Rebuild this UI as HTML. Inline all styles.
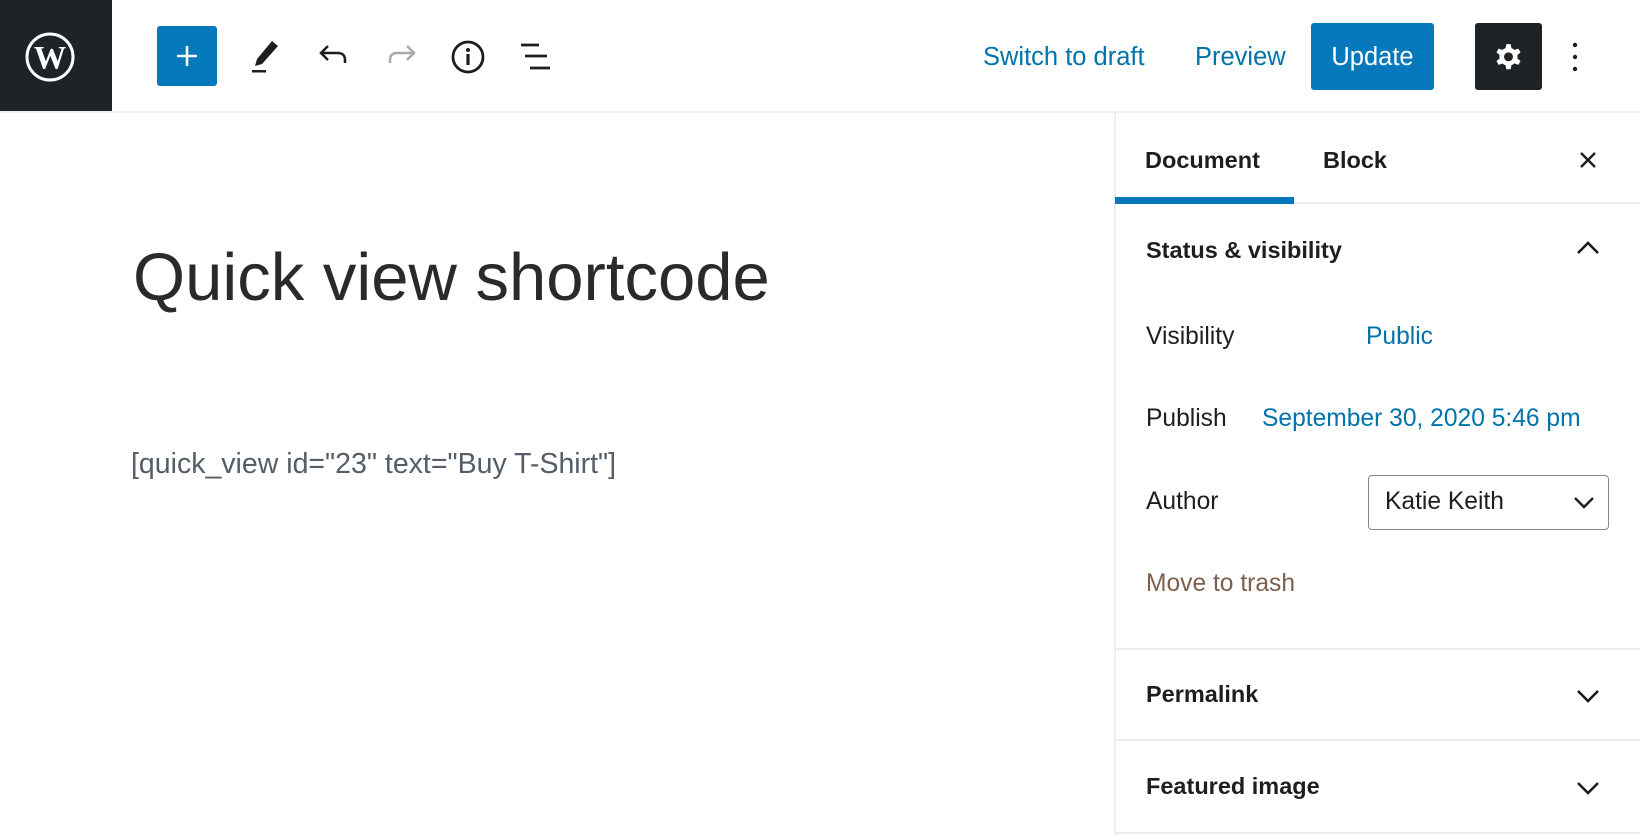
<!DOCTYPE html>
<html><head><meta charset="utf-8"><style>
*{margin:0;padding:0;box-sizing:border-box}
body{width:1640px;height:835px;background:#fff;font-family:"Liberation Sans",Arial,sans-serif;color:#1e1e1e;position:relative;overflow:hidden}
.a{position:absolute;white-space:nowrap}
.blue{color:#0073aa}
.t{font-size:24.6px;line-height:30px}
.b{font-weight:bold;font-size:23.5px;line-height:30px;color:#1e1e1e}
.hr{position:absolute;left:1115px;right:0;height:2px;background:#ececec}
</style></head><body>
<div class="a" style="left:0;top:0;width:112px;height:112px;background:#1e2327"></div>
<svg class="a" style="left:25px;top:32px" width="50" height="50" viewBox="0 0 20 20"><circle cx="10" cy="10" r="9.2" fill="none" stroke="#fff" stroke-width="1.2"/><text x="10" y="14.6" font-family="Liberation Serif,serif" font-weight="bold" font-size="13" fill="#fff" text-anchor="middle">W</text></svg>
<div class="a" style="left:0;top:111px;width:1640px;height:2px;background:#eee"></div>
<div class="a" style="left:157px;top:26px;width:60px;height:60px;background:#0679bd;border-radius:3px"></div>
<svg class="a" style="left:157px;top:26px" width="60" height="60"><path d="M30 20V40M20 30H40" stroke="#fff" stroke-width="2.5"/></svg>
<svg class="a" style="left:248px;top:38px" width="36" height="36" viewBox="0 0 36 36"><path d="M24 3l6 5L14 26l-7 2 2-7z" fill="#1e1e1e"/><rect x="4" y="32" width="14" height="2.5" fill="#1e1e1e"/></svg>
<svg class="a" style="left:316px;top:40px" width="36" height="30" viewBox="0 0 36 30"><path d="M12 6L5 13l7 7M5 13h17c5 0 7 3 7 7v3" fill="none" stroke="#1e1e1e" stroke-width="2.5"/></svg>
<svg class="a" style="left:383px;top:40px" width="36" height="30" viewBox="0 0 36 30"><path d="M24 6l7 7-7 7M31 13H14c-5 0-7 3-7 7v3" fill="none" stroke="#a7aaad" stroke-width="2.5"/></svg>
<svg class="a" style="left:450px;top:40px" width="36" height="36"><circle cx="18" cy="17" r="15" fill="none" stroke="#1e1e1e" stroke-width="2.8"/><circle cx="18" cy="10" r="2" fill="#1e1e1e"/><rect x="16.4" y="14" width="3.2" height="11" fill="#1e1e1e"/></svg>
<svg class="a" style="left:518px;top:40px" width="40" height="36"><path d="M3 5h18M7 16h22M12 28h20" stroke="#1e1e1e" stroke-width="2.8"/></svg>
<div class="a blue" style="left:983px;top:42px;font-size:25.5px;line-height:30px">Switch to draft</div>
<div class="a blue" style="left:1195px;top:42px;font-size:25.5px;line-height:30px">Preview</div>
<div class="a" style="left:1311px;top:23px;width:123px;height:67px;background:#0679bd;border-radius:3px;color:#fff;font-size:25.5px;line-height:69px;text-align:center">Update</div>
<div class="a" style="left:1475px;top:23px;width:67px;height:67px;background:#1e2327;border-radius:3px"></div>
<svg class="a" style="left:1490px;top:38px" width="37" height="37" viewBox="0 0 24 24"><path fill="#fff" d="M13.4 2h-2.8l-.5 2.6a7.6 7.6 0 0 0-2 1.1L5.6 4.9 4.2 7.3l2 1.7a7.6 7.6 0 0 0 0 2.3l-2 1.7 1.4 2.4 2.5-.9a7.6 7.6 0 0 0 2 1.2l.5 2.6h2.8l.5-2.6a7.6 7.6 0 0 0 2-1.2l2.5.9 1.4-2.4-2-1.7a7.6 7.6 0 0 0 0-2.3l2-1.7-1.4-2.4-2.5.8a7.6 7.6 0 0 0-2-1.1z" transform="translate(0 2)"/><circle cx="12" cy="12.2" r="2.9" fill="#1e2327"/></svg>
<svg class="a" style="left:1570px;top:42px" width="10" height="30"><circle cx="5" cy="3" r="2.2" fill="#1e1e1e"/><circle cx="5" cy="15" r="2.2" fill="#1e1e1e"/><circle cx="5" cy="27" r="2.2" fill="#1e1e1e"/></svg>
<div class="a" style="left:133px;top:238px;font-size:67px;line-height:80px;color:#2a2a2a;letter-spacing:0px">Quick view shortcode</div>
<div class="a" style="left:131px;top:448px;font-size:28.5px;line-height:32px;color:#555d66">[quick_view id="23" text="Buy T-Shirt"]</div>
<div class="a" style="left:1114px;top:113px;width:2px;height:722px;background:#eee"></div>
<div class="a b" style="left:1145px;top:145px">Document</div>
<div class="a b" style="left:1323px;top:145px">Block</div>
<svg class="a" style="left:1578px;top:150px" width="20" height="20"><path d="M3 3l14 14M17 3L3 17" stroke="#1e1e1e" stroke-width="2.4"/></svg>
<div class="hr" style="top:202px"></div>
<div class="a" style="left:1115px;top:197px;width:179px;height:7px;background:#0679bd"></div>
<div class="a b" style="left:1146px;top:235px">Status &amp; visibility</div>
<svg class="a" style="left:1576px;top:240px" width="24" height="16"><path d="M2 13l10-10 10 10" fill="none" stroke="#1e1e1e" stroke-width="2.6"/></svg>
<div class="a t" style="left:1146px;top:322px">Visibility</div>
<div class="a t blue" style="left:1366px;top:322px">Public</div>
<div class="a t" style="left:1146px;top:404px">Publish</div>
<div class="a t blue" style="left:1262px;top:404px">September 30, 2020 5:46 pm</div>
<div class="a t" style="left:1146px;top:487px">Author</div>
<div class="a" style="left:1368px;top:475px;width:241px;height:55px;border:1.5px solid #7e8993;border-radius:4px"></div>
<div class="a t" style="left:1385px;top:487px">Katie Keith</div>
<svg class="a" style="left:1573px;top:495px" width="22" height="14"><path d="M2 3l9 9 9-9" fill="none" stroke="#1e1e1e" stroke-width="2.4"/></svg>
<div class="a t" style="left:1146px;top:569px;color:#7d5f4c">Move to trash</div>
<div class="hr" style="top:648px"></div>
<div class="a b" style="left:1146px;top:679px">Permalink</div>
<svg class="a" style="left:1576px;top:688px" width="24" height="16"><path d="M2 3l10 10 10-10" fill="none" stroke="#1e1e1e" stroke-width="2.6"/></svg>
<div class="hr" style="top:739px"></div>
<div class="a b" style="left:1146px;top:771px">Featured image</div>
<svg class="a" style="left:1576px;top:780px" width="24" height="16"><path d="M2 3l10 10 10-10" fill="none" stroke="#1e1e1e" stroke-width="2.6"/></svg>
<div class="hr" style="top:832px"></div>
</body></html>
